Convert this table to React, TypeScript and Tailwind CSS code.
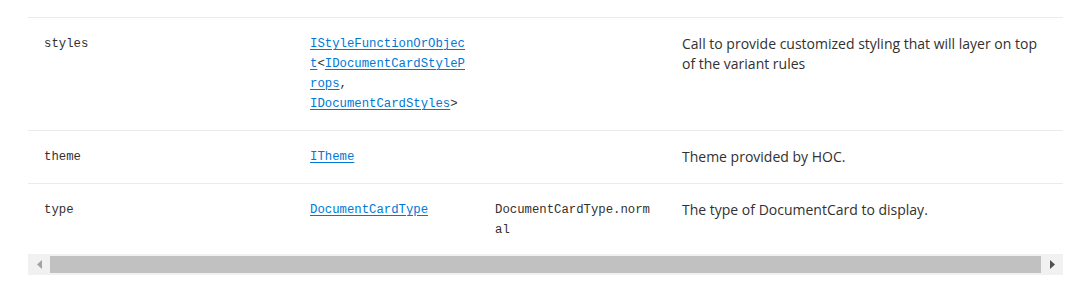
import React from "react";

const mono = "font-['Liberation_Mono',monospace] text-[12.3px] leading-[20px] text-[#323130]";
const link = "text-[#0078d4] underline underline-offset-2 decoration-1";

interface Row {
  name: string;
  type: React.ReactNode;
  def?: string;
  desc: string;
}

const rows: Row[] = [
  {
    name: "styles",
    type: (
      <>
        <a className={link}>IStyleFunctionOrObject</a>&lt;
        <a className={link}>IDocumentCardStyleProps</a>,{" "}
        <a className={link}>IDocumentCardStyles</a>&gt;
      </>
    ),
    desc: "Call to provide customized styling that will layer on top of the variant rules",
  },
  {
    name: "theme",
    type: <a className={link}>ITheme</a>,
    desc: "Theme provided by HOC.",
  },
  {
    name: "type",
    type: <a className={link}>DocumentCardType</a>,
    def: "DocumentCardType.normal",
    desc: "The type of DocumentCard to display.",
  },
];

export default function App() {
  return (
    <div className="w-[1068px] h-[283px] bg-white pt-[17px]">
      <div className="ml-[28px] w-[1035px]">
        {rows.map((r, i) => (
          <div
            key={r.name}
            className={`grid grid-cols-[266px_185px_187px_1fr] border-t border-[#edebe9] pt-[16px] ${
              i === rows.length - 1 ? "pb-[14px]" : "pb-[16px]"
            }`}
          >
            <div className={`${mono} px-[16px]`}>{r.name}</div>
            <div className={`${mono} px-[16px]`}>
              <div className="w-[156px] [overflow-wrap:anywhere]">{r.type}</div>
            </div>
            <div className={`${mono} px-[16px]`}>
              <div className="w-[156px] [overflow-wrap:anywhere]">{r.def}</div>
            </div>
            <div className="px-[16px] font-['Open_Sans',sans-serif] text-[14px] leading-[20px] text-[#323130]">
              {r.desc}
            </div>
          </div>
        ))}
        <div className="flex h-[21px] items-center bg-[#f1f1f1]">
          <div className="flex w-[22px] justify-center">
            <svg width="5" height="9" viewBox="0 0 5 9">
              <path d="M5 0 L0 4.5 L5 9 Z" fill="#a3a3a3" />
            </svg>
          </div>
          <div className="h-[17px] flex-1 bg-[#c1c1c1]" />
          <div className="flex w-[22px] justify-center">
            <svg width="5" height="9" viewBox="0 0 5 9">
              <path d="M0 0 L5 4.5 L0 9 Z" fill="#505050" />
            </svg>
          </div>
        </div>
      </div>
    </div>
  );
}
